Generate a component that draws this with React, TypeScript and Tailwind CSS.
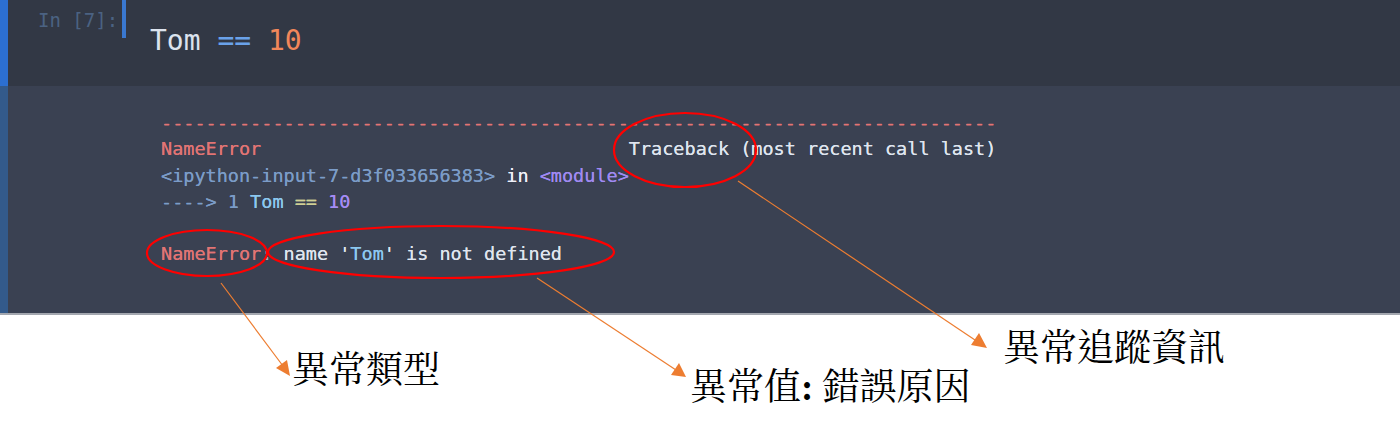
import React from "react";

const mono = { fontFamily: '"DejaVu Sans Mono", "Liberation Mono", monospace' };

export default function App() {
  const dashes = "-".repeat(75);
  return (
    <div className="relative w-[1400px] h-[431px] overflow-hidden bg-white">
      {/* input cell */}
      <div className="flex h-[86px] bg-[#323845]">
        <div className="w-[8px] bg-[#2c6fd1]" />
        <div className="w-[114px] pl-[30px] pt-[8px]">
          <span className="block text-[19px] leading-[24px] text-[#4b6282]" style={mono}>
            In [7]:
          </span>
        </div>
        <div className="w-[4px] h-[38px] bg-[#3a78d0]" />
        <div className="pl-[24px] pt-[21px]">
          <span className="block text-[28px] leading-[40px] text-[#dce3ee]" style={mono}>
            Tom <span className="text-[#6aa2ea]">==</span> <span className="text-[#f2875a]">10</span>
          </span>
        </div>
      </div>

      {/* output area */}
      <div className="flex h-[227px] bg-[#3a4152]">
        <div className="w-[8px] bg-[#335a8b]" />
        <pre
          className="pl-[153px] pt-[24px] text-[18.5px] leading-[26.3px] text-[#dfe5ef] whitespace-pre [text-shadow:0_0_0.6px_currentColor]"
          style={mono}
        >
          <span className="text-[#e27474]">{dashes}</span>
          {"\n"}
          <span className="text-[#e27474]">NameError</span>
          {"                                 "}
          <span className="text-[#dfe5ef]">Traceback (most recent call last)</span>
          {"\n"}
          <span className="text-[#7b9cc8]">&lt;ipython-input-7-d3f033656383&gt;</span>
          <span className="text-[#eef0f8]"> in </span>
          <span className="text-[#a08af2]">&lt;module&gt;</span>
          {"\n"}
          <span className="text-[#7b9cc8]">----&gt; 1 </span>
          <span className="text-[#8cc8f0]">Tom</span>
          <span className="text-[#cfcf94]"> == </span>
          <span className="text-[#a58cf5]">10</span>
          {"\n\n"}
          <span className="text-[#e27474]">NameError</span>
          <span className="text-[#9aa6b8]">: </span>
          <span className="text-[#dfe5ef]">name '</span>
          <span className="text-[#8cc8f0]">Tom</span>
          <span className="text-[#dfe5ef]">' is not defined</span>
        </pre>
      </div>
      <div className="h-[2px] bg-[#a3a7af]" />

      {/* annotations overlay */}
      <svg className="absolute left-0 top-0" width="1400" height="431" viewBox="0 0 1400 431">
        <ellipse cx="685" cy="150" rx="71" ry="37" fill="none" stroke="#ff0000" strokeWidth="2.2" />
        <ellipse cx="207" cy="253" rx="60" ry="23" fill="none" stroke="#ff0000" strokeWidth="2.2" />
        <ellipse cx="441" cy="252" rx="173" ry="26" fill="none" stroke="#ff0000" strokeWidth="2.2" />

        <g stroke="#ed7d31" strokeWidth="1.2" fill="none">
          <line x1="221" y1="283" x2="283" y2="366" />
          <line x1="537" y1="278" x2="676" y2="370" />
          <line x1="738" y1="181" x2="975" y2="340" />
        </g>
        <g fill="#ed7d31">
          <polygon points="290,376 276,368 287,360" />
          <polygon points="686,377 671,375 679,363" />
          <polygon points="987,348 971,345 979,333" />
        </g>
      </svg>

      <div
        className="absolute left-[292px] top-[349px] text-[37px] leading-[44px] text-black whitespace-nowrap"
        style={{ fontFamily: '"Liberation Serif", "Noto Serif CJK TC", "Noto Sans CJK TC", serif' }}
      >
        異常類型
      </div>
      <div
        className="absolute left-[690px] top-[366px] text-[37px] leading-[44px] text-black whitespace-nowrap"
        style={{ fontFamily: '"Liberation Serif", "Noto Serif CJK TC", "Noto Sans CJK TC", serif' }}
      >
        異常值<span className="font-bold">:</span> 錯誤原因
      </div>
      <div
        className="absolute left-[1003px] top-[327px] text-[37px] leading-[44px] text-black whitespace-nowrap"
        style={{ fontFamily: '"Liberation Serif", "Noto Serif CJK TC", "Noto Sans CJK TC", serif' }}
      >
        異常追蹤資訊
      </div>
    </div>
  );
}
